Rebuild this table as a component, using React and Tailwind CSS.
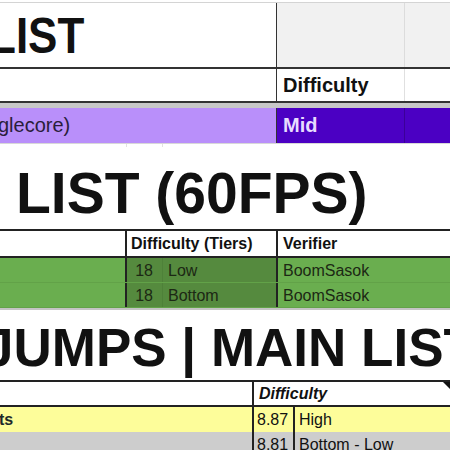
export default function App() {
  return (
    <div className="w-[450px] h-[450px] overflow-hidden bg-white text-[#111] font-['Liberation_Sans',Arial,sans-serif]">
      {/* top sheet */}
      <div className="h-[3px] border-b border-[#d4d4d4]" />
      <div className="flex h-[64px]">
        <div className="w-[277px] overflow-hidden border-r border-[#333]">
          <div className="ml-[-11px] mt-[3px] origin-left scale-x-[0.88] text-[50px] leading-[60px] font-bold whitespace-nowrap">LIST</div>
        </div>
        <div className="flex-1 flex bg-[#f1f1f1]">
          <div className="w-[128px] border-r border-[#dcdcdc]" />
        </div>
      </div>
      <div className="h-[2px] bg-[#333]" />
      <div className="flex h-[32px]">
        <div className="w-[277px] border-r border-[#333]" />
        <div className="w-[128px] border-r border-[#e0e0e0] pl-[6px] text-[20px] font-bold leading-[32px]">Difficulty</div>
      </div>
      <div className="h-[2px] bg-[#333]" />
      <div className="h-[5px] bg-[#c8c8c8]" />
      <div className="flex h-[35px] text-[20px] leading-[35px]">
        <div className="w-[277px] bg-[#b98ffa] border-r border-[#333] text-[#2a1e3a] whitespace-nowrap overflow-hidden">
          <span className="ml-[-2px]">glecore)</span>
        </div>
        <div className="w-[128px] bg-[#4b00c3] border-r border-[#3b0098] pl-[6px] font-bold text-[#e8dcff]">Mid</div>
        <div className="flex-1 bg-[#4b00c3]" />
      </div>
      <div className="h-[4px] border-t border-[#d8d8d8] flex">
        <div className="w-[127px] border-r border-[#e2e2e2]" />
        <div className="w-[36px] border-r border-[#e2e2e2]" />
      </div>

      {/* 60fps sheet */}
      <div className="h-[82px] overflow-hidden">
        <div className="ml-[16px] mt-[14px] text-[57px] leading-[64px] font-bold whitespace-nowrap">LIST (60FPS)</div>
      </div>
      <div className="h-[2px] bg-[#222]" />
      <div className="flex h-[25px] text-[16px] font-bold leading-[25px]">
        <div className="w-[127px] border-r-2 border-[#222]" />
        <div className="w-[151px] border-r-2 border-[#222] pl-[4px]">Difficulty (Tiers)</div>
        <div className="flex-1 pl-[5px]">Verifier</div>
      </div>
      <div className="h-[2px] bg-[#222]" />
      {[['18', 'Low'], ['18', 'Bottom']].map(([n, t], i) => (
        <div key={i} className="flex h-[25px] text-[16px] leading-[25px] text-[#1c2814] bg-[#6aae4f] border-b border-[#62a248]">
          <div className="w-[127px] border-r-2 border-[#222]" />
          <div className="w-[151px] flex bg-[#558a3e] border-r-2 border-[#222]">
            <div className="w-[36px] pr-[9px] text-right border-r border-[#4e8139]">{n}</div>
            <div className="pl-[5px]">{t}</div>
          </div>
          <div className="flex-1 pl-[5px]">BoomSasok</div>
        </div>
      ))}
      <div className="h-[2px] bg-[#c4c4c4]" />

      {/* main list sheet */}
      <div className="h-[70px] overflow-hidden">
        <div className="ml-[-16px] mt-[7px] text-[53px] leading-[62px] font-bold whitespace-nowrap">JUMPS | MAIN LIST</div>
      </div>
      <div className="h-[2px] bg-[#222]" />
      <div className="relative flex h-[23px] text-[16px] leading-[23px]">
        <div className="w-[254px] border-r-2 border-[#222]" />
        <div className="flex-1 pl-[5px] font-bold italic">Difficulty</div>
        <div className="absolute right-0 top-0 w-0 h-0 border-t-[7px] border-t-[#111] border-l-[7px] border-l-transparent" />
      </div>
      <div className="h-[2px] bg-[#222]" />
      <div className="flex h-[25px] text-[16px] leading-[25px] bg-[#fdfd9a]">
        <div className="w-[254px] border-r-2 border-[#222] font-bold text-[#1c2a2a] overflow-hidden">
          <span className="ml-[-1px]">ts</span>
        </div>
        <div className="w-[41px] border-r-2 border-[#222] pl-[3px]">8.87</div>
        <div className="flex-1 pl-[4px]">High</div>
      </div>
      <div className="flex h-[25px] text-[16px] leading-[25px] bg-[#cdcdcd]">
        <div className="w-[254px] border-r-2 border-[#222]" />
        <div className="w-[41px] border-r-2 border-[#222] pl-[3px]">8.81</div>
        <div className="flex-1 pl-[4px]">Bottom - Low</div>
      </div>
    </div>
  );
}
